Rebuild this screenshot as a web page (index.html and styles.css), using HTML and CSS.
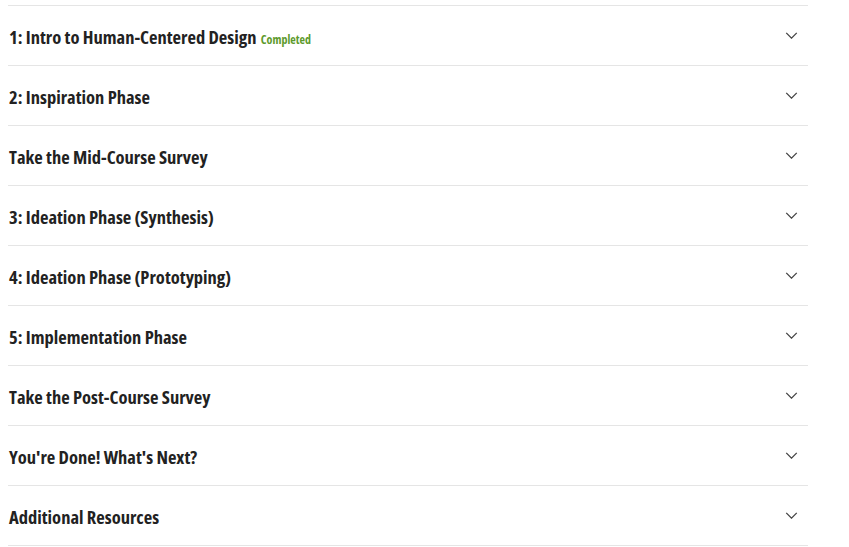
FILE: index.html
```html
<!DOCTYPE html>
<html>
<head>
<meta charset="utf-8">
<link rel="stylesheet" href="styles.css">
</head>
<body>
<div class="list">
  <div class="row"><div class="title">1: Intro to Human-Centered Design <span class="done">Completed</span></div><svg class="chev" viewBox="0 0 14 8"><path d="M1 1l6 6 6-6"/></svg></div>
  <div class="row"><div class="title">2: Inspiration Phase</div><svg class="chev" viewBox="0 0 14 8"><path d="M1 1l6 6 6-6"/></svg></div>
  <div class="row"><div class="title">Take the Mid-Course Survey</div><svg class="chev" viewBox="0 0 14 8"><path d="M1 1l6 6 6-6"/></svg></div>
  <div class="row"><div class="title">3: Ideation Phase (Synthesis)</div><svg class="chev" viewBox="0 0 14 8"><path d="M1 1l6 6 6-6"/></svg></div>
  <div class="row"><div class="title">4: Ideation Phase (Prototyping)</div><svg class="chev" viewBox="0 0 14 8"><path d="M1 1l6 6 6-6"/></svg></div>
  <div class="row"><div class="title">5: Implementation Phase</div><svg class="chev" viewBox="0 0 14 8"><path d="M1 1l6 6 6-6"/></svg></div>
  <div class="row"><div class="title">Take the Post-Course Survey</div><svg class="chev" viewBox="0 0 14 8"><path d="M1 1l6 6 6-6"/></svg></div>
  <div class="row"><div class="title">You're Done! What's Next?</div><svg class="chev" viewBox="0 0 14 8"><path d="M1 1l6 6 6-6"/></svg></div>
  <div class="row"><div class="title">Additional Resources</div><svg class="chev" viewBox="0 0 14 8"><path d="M1 1l6 6 6-6"/></svg></div>
</div>
</body>
</html>
```
FILE: styles.css
```css
html, body { margin: 0; padding: 0; background: #fff; }
.list {
  margin: 5px 0 0 8px;
  width: 800px;
  border-top: 1px solid #e5e5e5;
}
.row {
  border-bottom: 1px solid #e5e5e5;
  display: flex;
  align-items: center;
  justify-content: space-between;
  padding: 0 10px 0 1px;
  box-sizing: border-box;
  height: 60px;
}
.title {
  font-family: "Open Sans", sans-serif;
  font-stretch: 75%;
  font-weight: 700;
  font-size: 18.5px;
  color: #222;
  margin-top: 1px;
}
.done {
  font-size: 12px;
  color: #5d9a2c;
  margin-left: 1px;
}
.chev {
  width: 13px;
  height: 7px;
  fill: none;
  stroke: #444;
  stroke-width: 1.5;
}
```
